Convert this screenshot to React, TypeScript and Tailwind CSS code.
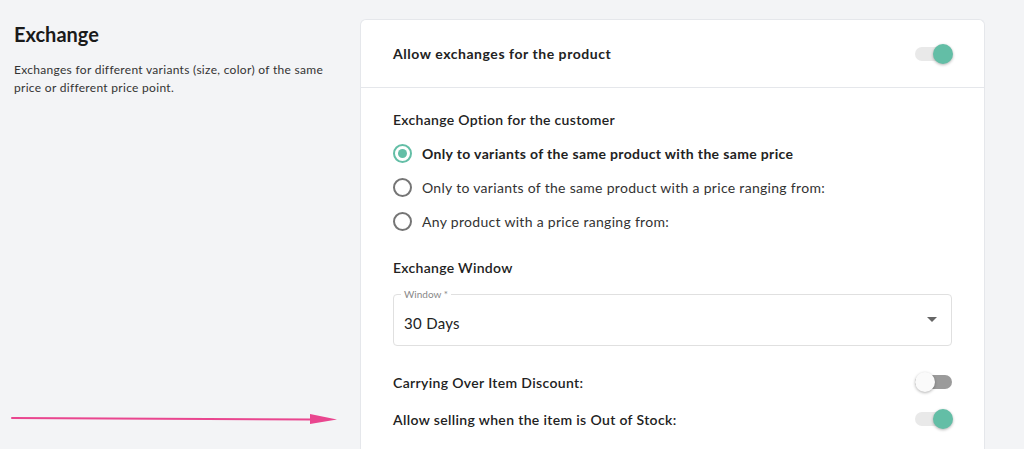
import React from "react";

function Toggle({ on }: { on: boolean }) {
  return (
    <div className="relative h-[20px] w-[37px] shrink-0">
      <div
        className={
          "absolute left-0 right-0 top-[3px] h-[14px] rounded-full " +
          (on ? "bg-[#e9e9e9]" : "bg-[#9b9b9b]")
        }
      />
      <div
        className={
          "absolute top-0 h-[20px] w-[20px] rounded-full shadow-[0_1px_3px_rgba(0,0,0,0.3)] " +
          (on ? "right-[-1px] bg-[#63bea6]" : "left-0 bg-[#fafafa]")
        }
      />
    </div>
  );
}

function Radio({ checked, label }: { checked: boolean; label: string }) {
  return (
    <div className="flex h-[34px] items-center">
      <div
        className={
          "flex h-[19px] w-[19px] items-center justify-center rounded-full border-2 " +
          (checked ? "border-[#63bea6]" : "border-[#757575]")
        }
      >
        {checked && <div className="h-[9px] w-[9px] rounded-full bg-[#63bea6]" />}
      </div>
      <span
        className={
          "ml-[10px] text-[14px] " +
          (checked
            ? "font-bold tracking-[0.35px] text-[#222]"
            : "tracking-[0.3px] text-[#333]")
        }
      >
        {label}
      </span>
    </div>
  );
}

export default function App() {
  return (
    <div
      className="relative h-[449px] w-[1024px] overflow-hidden bg-[#f3f4f6]"
      style={{ fontFamily: '"Lato", "Noto Sans", sans-serif' }}
    >
      <div className="flex h-full pr-[39px] pt-[19px]">
        <div className="w-[360px] shrink-0 pl-[14px] pr-[30px]">
          <h2 className="mt-[2px] text-[20px] font-bold leading-[26px] text-[#1a1a1a]">
            Exchange
          </h2>
          <p className="mt-[14px] text-[12px] leading-[18px] tracking-[0.3px] text-[#333]">
            Exchanges for different variants (size, color) of the same price or
            different price point.
          </p>
        </div>
        <div className="flex-1 rounded-t-[6px] border border-b-0 border-[#e5e7eb] bg-white">
          <div className="flex h-[68px] items-center justify-between border-b border-[#e5e7eb] pl-[32px] pr-[32px]">
            <span className="text-[14px] font-bold tracking-[0.55px] text-[#222]">
              Allow exchanges for the product
            </span>
            <Toggle on />
          </div>
          <div className="px-[32px] pt-[20px]">
            <div className="text-[14px] font-semibold leading-[24px] tracking-[0.3px] text-[#222]">
              Exchange Option for the customer
            </div>
            <div className="mt-[4px]">
              <Radio checked label="Only to variants of the same product with the same price" />
              <Radio checked={false} label="Only to variants of the same product with a price ranging from:" />
              <Radio checked={false} label="Any product with a price ranging from:" />
            </div>
            <div className="mt-[18px] text-[14px] font-semibold leading-[24px] tracking-[0.3px] text-[#222]">
              Exchange Window
            </div>
            <div className="relative mt-[14px] flex h-[52px] items-center justify-between rounded-[4px] border border-[#e0e0e0] pl-[10px] pr-[14px]">
              <span className="absolute left-[7px] top-[-8px] bg-white px-[3px] text-[10px] leading-[14px] text-[#888]">
                Window *
              </span>
              <span className="mt-[6px] text-[15px] tracking-[0.3px] text-[#222]">30 Days</span>
              <svg width="10" height="5" viewBox="0 0 10 5" className="mb-[2px]">
                <path d="M0 0 L10 0 L5 5 Z" fill="#666" />
              </svg>
            </div>
            <div className="mt-[23px] flex h-[26px] items-center justify-between">
              <span className="text-[14px] font-semibold tracking-[0.35px] text-[#222]">
                Carrying Over Item Discount:
              </span>
              <Toggle on={false} />
            </div>
            <div className="mt-[11px] flex h-[26px] items-center justify-between">
              <span className="text-[14px] font-semibold tracking-[0.35px] text-[#222]">
                Allow selling when the item is Out of Stock:
              </span>
              <Toggle on />
            </div>
          </div>
        </div>
      </div>
      <svg
        className="absolute left-0 top-0"
        width="360"
        height="449"
        viewBox="0 0 360 449"
      >
        <line x1="12" y1="418" x2="312" y2="419.5" stroke="#e9468f" strokeWidth="2" strokeLinecap="round" />
        <path d="M310 414 L337 419.5 L310 424 Z" fill="#e9468f" />
      </svg>
    </div>
  );
}
